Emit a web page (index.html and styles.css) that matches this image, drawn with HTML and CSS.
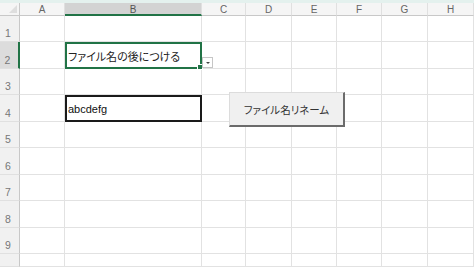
FILE: index.html
```html
<!DOCTYPE html>
<html>
	<head>
		<meta charset="UTF-8">
		<title>ファイル名リネーム</title>
		<link rel="stylesheet" href="styles.css">
		<script>
			window.onload=function(){
				var cols=['A','B','C','D','E','F','G','H'];
				var sheet=document.querySelector(".sheet");
				var html='<div class="corner"></div>';

				//列見出し
				for(var i=0;i<cols.length;i++){
					var cl=cols[i]=='B'?' sel':'';
					html+='<div class="colhead'+cl+'">'+cols[i]+'</div>';
				}

				//行
				for(var r=1;r<=10;r++){
					var rl=r==2?' sel':'';
					html+='<div class="rowhead'+rl+'">'+(r<10?r:'')+'</div>';
					for(var c=0;c<cols.length;c++){
						var name=cols[c]+r;
						if(name=='B2'){
							html+='<div class="cell active"><span class="jp">ファイル名の後につける</span><i class="handle"></i></div>';
						}else if(name=='B4'){
							html+='<div class="cell box">abcdefg</div>';
						}else{
							html+='<div class="cell"></div>';
						}
					}
				}
				sheet.innerHTML=html;
			};
		</script>
	</head>

	<body>
		<div id="wrap">
			<div class="strip"></div>
			<div class="sheet">
				<!--セルはスクリプトで生成-->
			</div>
			<span class="drop"><i></i></span>
			<button class="rename">ファイル名リネーム</button>
		</div>
	</body>

</html>
```

FILE: styles.css
```css
body {
	margin: 0;
	padding: 0;
	background: #fff;
	overflow: hidden;
}

#wrap {
	position: relative;
	width: 474px;
	height: 267px;
	overflow: hidden;
}

.strip {
	height: 3px;
	background: #e4f1ee;
}

.sheet {
	display: grid;
	grid-template-columns: 20px 45px 137px 44px 46px 45px 45px 46px 46px;
	grid-template-rows: 13px 26px 27px 26px 27px 26px 27px 26px 27px 26px 13px;
}

.sheet div {
	box-sizing: border-box;
	font-family: "Liberation Sans", "Noto Sans CJK JP", sans-serif;
}

.corner {
	position: relative;
	background: #f5f5f5;
	border-right: 1px solid #c8c8c8;
	border-bottom: 1px solid #c8c8c8;
}

.corner:after {
	content: "";
	position: absolute;
	right: 2px;
	bottom: 2px;
	border-left: 8px solid transparent;
	border-bottom: 8px solid #dedede;
}

.colhead {
	background: #f5f5f5;
	border-right: 1px solid #e0e0e0;
	border-bottom: 1px solid #c8c8c8;
	color: #666;
	font-size: 10px;
	line-height: 13px;
	text-align: center;
}

.colhead.sel {
	background: #d3d3d3;
	border-bottom: 2px solid #217346;
	color: #555;
}

.rowhead {
	display: flex;
	align-items: flex-end;
	justify-content: center;
	padding: 0 3px 3px 0;
	background: #f1f1f1;
	border-right: 1px solid #c8c8c8;
	border-bottom: 1px solid #e0e0e0;
	color: #777;
	font-size: 10.5px;
	line-height: 10px;
}

.rowhead.sel {
	background: #dcdcdc;
	border-right: 2px solid #217346;
}

.cell {
	display: flex;
	align-items: center;
	padding-left: 3px;
	border-right: 1px solid #e2e2e2;
	border-bottom: 1px solid #e2e2e2;
	font-size: 11px;
	color: #111;
}

.cell.active {
	position: relative;
	border: 2px solid #217346;
	padding-left: 1px;
}

.cell.box {
	border: 2px solid #1a1a1a;
	padding-left: 1px;
}

.jp {
	font-family: "Noto Sans CJK JP", sans-serif;
	font-size: 11px;
	font-feature-settings: "palt";
	color: #222;
}

.handle {
	position: absolute;
	right: -3px;
	bottom: -3px;
	width: 4px;
	height: 4px;
	background: #217346;
	border: 1px solid #fff;
}

.drop {
	position: absolute;
	left: 202px;
	top: 57px;
	width: 11px;
	height: 11px;
	box-sizing: border-box;
	background: #fff;
	border: 1px solid #c6c6c6;
}

.drop i {
	position: absolute;
	left: 3px;
	top: 4px;
	border-left: 2px solid transparent;
	border-right: 2px solid transparent;
	border-top: 2px solid #444;
}

.rename {
	position: absolute;
	left: 229px;
	top: 92px;
	width: 116px;
	height: 35px;
	margin: 0;
	padding: 0;
	background: #f0f0f0;
	border: 1px solid #dcdcdc;
	border-right: 2px solid #6b6b6b;
	border-bottom: 2px solid #6b6b6b;
	font-family: "Noto Sans CJK JP", sans-serif;
	font-size: 10.5px;
	font-feature-settings: "palt";
	color: #333;
}
```
